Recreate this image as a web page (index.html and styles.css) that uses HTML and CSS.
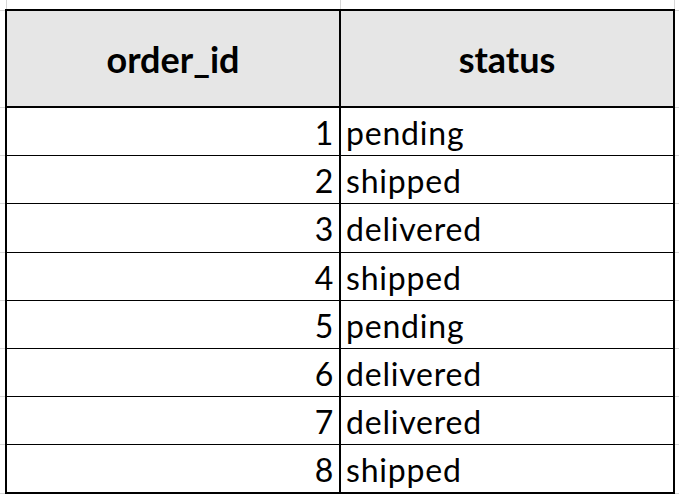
FILE: index.html
```html
<!DOCTYPE html>
<html lang="en">
<head>
<meta charset="utf-8">
<title>orders</title>
<link rel="stylesheet" href="styles.css">
</head>
<body>
<div class="sheet">
  <div class="row head">
    <div class="cell">order_id</div>
    <div class="cell">status</div>
  </div>
  <div class="row"><div class="cell num">1</div><div class="cell txt">pending</div></div>
  <div class="row"><div class="cell num">2</div><div class="cell txt">shipped</div></div>
  <div class="row tall"><div class="cell num">3</div><div class="cell txt">delivered</div></div>
  <div class="row"><div class="cell num">4</div><div class="cell txt">shipped</div></div>
  <div class="row"><div class="cell num">5</div><div class="cell txt">pending</div></div>
  <div class="row"><div class="cell num">6</div><div class="cell txt">delivered</div></div>
  <div class="row"><div class="cell num">7</div><div class="cell txt">delivered</div></div>
  <div class="row last"><div class="cell num">8</div><div class="cell txt">shipped</div></div>
</div>
</body>
</html>
```

FILE: styles.css
```css
html, body {
  margin: 0;
  padding: 0;
}
body {
  width: 679px;
  height: 494px;
  overflow: hidden;
  background-color: #fff;
  background-image:
    linear-gradient(#d6d6d6, #d6d6d6),
    linear-gradient(#d6d6d6, #d6d6d6),
    linear-gradient(#d6d6d6, #d6d6d6),
    linear-gradient(#d6d6d6, #d6d6d6),
    linear-gradient(#d6d6d6, #d6d6d6),
    linear-gradient(#d6d6d6, #d6d6d6),
    linear-gradient(#d6d6d6, #d6d6d6),
    linear-gradient(#d6d6d6, #d6d6d6),
    linear-gradient(#d6d6d6, #d6d6d6),
    linear-gradient(#d6d6d6, #d6d6d6),
    linear-gradient(#d6d6d6, #d6d6d6),
    linear-gradient(#d6d6d6, #d6d6d6),
    linear-gradient(#d6d6d6, #d6d6d6);
  background-repeat: no-repeat;
  background-size:
    100% 1px, 100% 1px, 100% 1px, 100% 1px, 100% 1px,
    100% 1px, 100% 1px, 100% 1px, 100% 1px, 100% 1px,
    1px 9px, 1px 9px, 1px 9px;
  background-position:
    0 10px, 0 107px, 0 155px, 0 203px, 0 252px,
    0 300px, 0 348px, 0 396px, 0 444px, 0 493px,
    6px 0, 340px 0, 674px 0;
  font-family: Lato, "Open Sans", sans-serif;
  color: #000;
}
.sheet {
  margin: 9px 0 0 5px;
  width: 670px;
  border: 2px solid #000;
  box-sizing: border-box;
  background: #fff;
}
.row {
  display: flex;
  height: 48px;
  border-bottom: 1px solid #000;
  box-sizing: border-box;
}
.row.tall {
  height: 49px;
}
.row.last {
  border-bottom: none;
  height: 47px;
}
.row.head {
  height: 97px;
  border-bottom: 2px solid #000;
  background: #e6e6e6;
}
.cell {
  width: 332px;
  box-sizing: border-box;
  display: flex;
  align-items: center;
  font-size: 32px;
  letter-spacing: 0.8px;
  line-height: 1;
  padding-top: 2px;
}
.cell:first-child {
  border-right: 2px solid #000;
  width: 334px;
}
.head .cell {
  justify-content: center;
  font-weight: 700;
  font-size: 36px;
  letter-spacing: 0;
  padding-top: 0;
}
.num {
  justify-content: flex-end;
  padding-right: 5px;
}
.txt {
  padding-left: 5px;
}
```
